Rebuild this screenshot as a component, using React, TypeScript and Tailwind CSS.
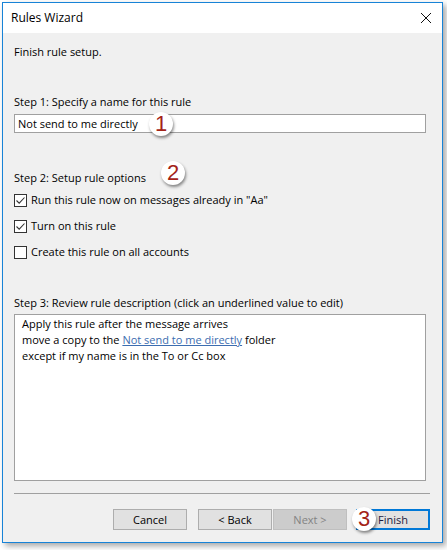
import React from 'react';

/* ── Numbered callout badge ─────────────────────────────── */
function Badge({ n, className }: { n: string; className: string }) {
  return (
    <div
      className={`absolute flex h-[24px] w-[24px] items-center justify-center rounded-full bg-white text-[22px] leading-none text-[#a32318] shadow-[1px_2px_3px_rgba(0,0,0,0.45)] ${className}`}
      style={{ fontFamily: '"Liberation Sans", Arial, sans-serif' }}
    >
      {n}
    </div>
  );
}

function Checkbox({ checked, label }: { checked: boolean; label: string }) {
  return (
    <div className="flex h-[16px] items-center gap-[4px]">
      <div className="flex h-[13px] w-[13px] items-center justify-center border border-[#333] bg-white">
        {checked && (
          <svg width="11" height="11" viewBox="0 0 11 11">
            <path d="M1.5 5.5 L4.2 8.2 L9.5 2.5" fill="none" stroke="#333" strokeWidth="1.1" />
          </svg>
        )}
      </div>
      <span>{label}</span>
    </div>
  );
}

function Button({ label, disabled, primary }: { label: string; disabled?: boolean; primary?: boolean }) {
  return (
    <div
      className={`flex h-[21px] w-[74px] items-center justify-center ${
        primary
          ? 'border-2 border-[#0078d7] bg-[#e1e1e1] text-[#1a1a40]'
          : disabled
          ? 'border border-[#bfbfbf] bg-[#cccccc] text-[#838383]'
          : 'border border-[#adadad] bg-[#e1e1e1]'
      }`}
    >
      {label}
    </div>
  );
}

export default function App() {
  return (
    <div
      className="h-[550px] w-[447px] bg-white pl-[2px] pt-[2px] text-[11px] leading-[16px] text-black"
      style={{ fontFamily: '"Open Sans", "Noto Sans", sans-serif' }}
    >
      <div className="relative flex h-[541px] w-[441px] flex-col border border-[#1883d7] bg-[#f0f0f0] shadow-[3px_3px_6px_rgba(0,0,0,0.35)]">
        {/* title bar */}
        <div className="flex h-[30px] shrink-0 items-center justify-between bg-white pl-[8px] pr-[10px]">
          <span className="text-[12px]">Rules Wizard</span>
          <svg width="12" height="12" viewBox="0 0 12 12">
            <path d="M1 1 L11 11 M11 1 L1 11" stroke="#111" strokeWidth="1" />
          </svg>
        </div>

        <div className="flex flex-1 flex-col px-[11px]">
          <p className="mt-[11px]">Finish rule setup.</p>

          <p className="mt-[34px]">Step 1: Specify a name for this rule</p>
          <div className="relative mt-[4px] flex h-[19px] w-[412px] items-center border border-[#a0a0a0] bg-white px-[3px]">
            Not send to me directly
            <Badge n="1" className="left-[134px] top-[-3px]" />
          </div>

          <div className="relative mt-[37px]">
            <p>Step 2: Setup rule options</p>
            <Badge n="2" className="left-[147px] top-[-9px]" />
          </div>
          <div className="mt-[6px] flex flex-col gap-[10px]">
            <Checkbox checked label={'Run this rule now on messages already in "Aa"'} />
            <Checkbox checked label="Turn on this rule" />
            <Checkbox checked={false} label="Create this rule on all accounts" />
          </div>

          <p className="mt-[35px]">Step 3: Review rule description (click an underlined value to edit)</p>
          <div className="mt-[3px] h-[167px] w-[412px] border border-[#a0a0a0] bg-white px-[7px] pt-[1px]">
            <p>Apply this rule after the message arrives</p>
            <p>
              move a copy to the{' '}
              <span className="text-[#3c6db0] underline">Not send to me directly</span> folder
            </p>
            <p>except if my name is in the To or Cc box</p>
          </div>

          <div className="mt-[12px] h-px w-[416px] bg-[#a0a0a0]" />

          <div className="relative mt-[15px] flex w-[416px] justify-end">
            <Button label="Cancel" />
            <div className="w-[11px]" />
            <Button label="< Back" />
            <div className="w-[1px]" />
            <Button label="Next >" disabled />
            <div className="w-[9px]" />
            <Button label="Finish" primary />
            <Badge n="3" className="left-[338px] top-[-2px]" />
          </div>
        </div>
      </div>
    </div>
  );
}
